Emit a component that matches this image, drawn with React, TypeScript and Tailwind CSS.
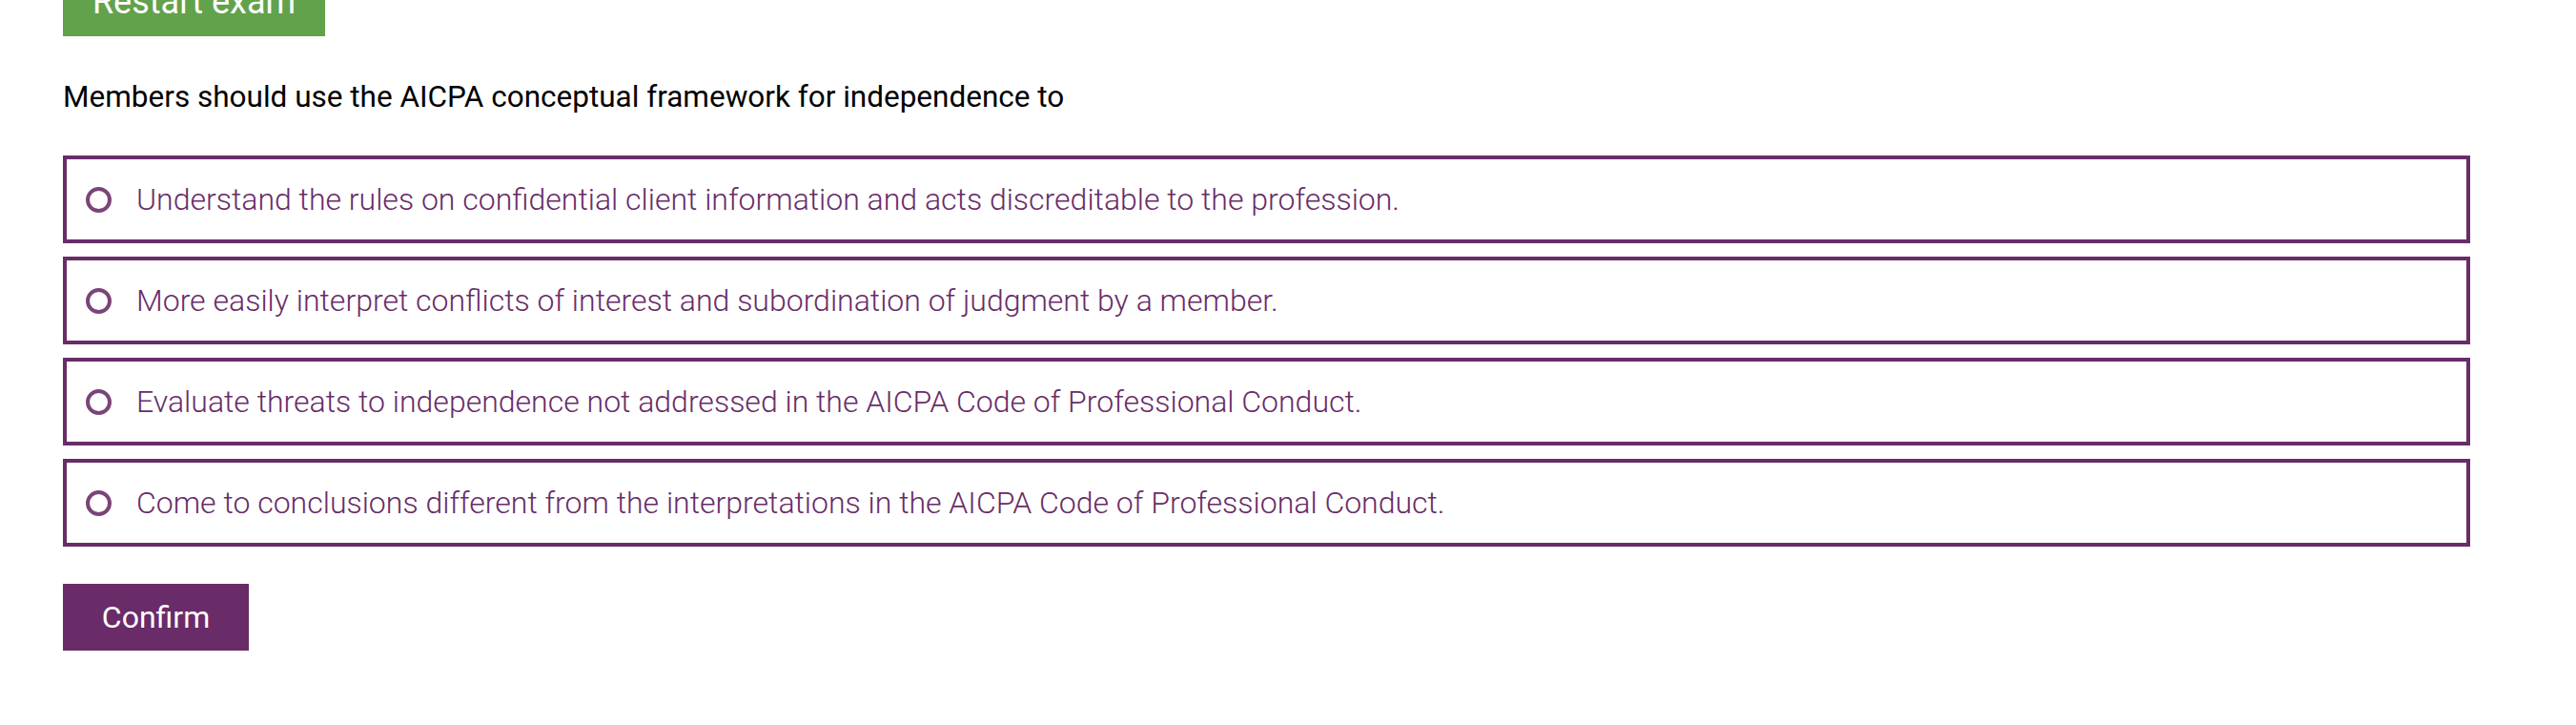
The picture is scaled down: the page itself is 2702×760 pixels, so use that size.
import { useState } from 'react';

const options = [
  'Understand the rules on confidential client information and acts discreditable to the profession.',
  'More easily interpret conflicts of interest and subordination of judgment by a member.',
  'Evaluate threats to independence not addressed in the AICPA Code of Professional Conduct.',
  'Come to conclusions different from the interpretations in the AICPA Code of Professional Conduct.',
];

export default function App() {
  const [picked, setPicked] = useState<number | null>(null);

  return (
    <main className="min-h-screen overflow-hidden bg-white pl-[66px] pr-[111px] font-['Roboto','Liberation_Sans',sans-serif]">
      <button className="-mt-[42px] flex h-[80px] w-[275px] items-center justify-center bg-[#62a24b] pt-[8px] text-[36px] text-white">
        Restart exam
      </button>

      <p className="mt-[46px] text-[31.5px] leading-[36px] text-black">
        Members should use the AICPA conceptual framework for independence to
      </p>

      <div className="mt-[43px] flex flex-col gap-[14px]">
        {options.map((text, i) => (
          <label
            key={i}
            onClick={() => setPicked(i)}
            className="flex h-[92px] cursor-pointer items-center border-4 border-[#692c68] pl-[20px] text-[32px] font-light text-[#692c68]"
          >
            <span className="flex h-[27px] w-[27px] shrink-0 items-center justify-center rounded-full border-[4.5px] border-[#7a4579]">
              {picked === i && <span className="h-[9px] w-[9px] rounded-full bg-[#692c68]" />}
            </span>
            <span className="ml-[26px]">{text}</span>
          </label>
        ))}
      </div>

      <button className="mt-[39px] h-[70px] w-[195px] bg-[#692c68] text-[32px] text-white">Confirm</button>
    </main>
  );
}
